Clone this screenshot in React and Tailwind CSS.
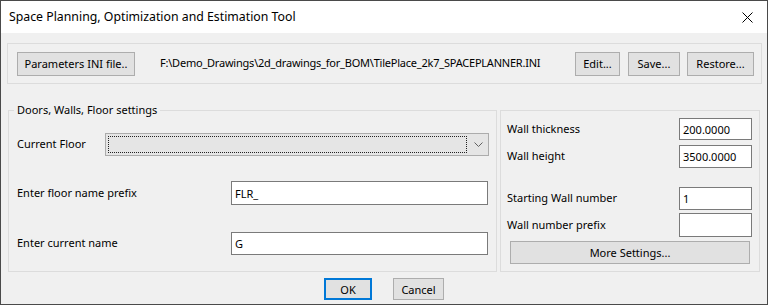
import React from "react";

const font = { fontFamily: '"Noto Sans", "Open Sans", sans-serif' };

function Btn({ children, className = "" }) {
  return (
    <div
      className={
        "flex items-center justify-center bg-[#e1e1e1] border border-[#adadad] text-[11px] text-black leading-none " +
        className
      }
    >
      {children}
    </div>
  );
}

function TextBox({ value, className = "" }) {
  return (
    <div
      className={
        "flex items-center bg-white border border-[#7a7a7a] pl-[3px] text-[11px] text-black leading-none " +
        className
      }
    >
      {value}
    </div>
  );
}

export default function App() {
  return (
    <div
      className="w-[768px] h-[305px] bg-[#f0f0f0] border border-[#4a4a4a] flex flex-col text-[11px] text-black overflow-hidden"
      style={font}
    >
      {/* Title bar */}
      <div className="h-[32px] bg-white flex items-center justify-between pl-[8px] pr-[14px] shrink-0">
        <span className="text-[12.3px]">Space Planning, Optimization and Estimation Tool</span>
        <svg width="11" height="11" viewBox="0 0 11 11">
          <path d="M0.5 0.5 L10.5 10.5 M10.5 0.5 L0.5 10.5" stroke="#000" strokeWidth="1" />
        </svg>
      </div>

      {/* INI file group */}
      <div className="mt-[10px] ml-[6px] mr-[5px] h-[41px] border border-[#dcdcdc] flex items-center pl-[9px] pr-[7px] shrink-0">
        <Btn className="w-[118px] h-[24px]">Parameters INI file..</Btn>
        <span className="ml-[25px] tracking-[-0.22px]">F:\Demo_Drawings\2d_drawings_for_BOM\TilePlace_2k7_SPACEPLANNER.INI</span>
        <div className="flex-1" />
        <Btn className="w-[45px] h-[24px]">Edit...</Btn>
        <Btn className="w-[52px] h-[24px] ml-[8px]">Save...</Btn>
        <Btn className="w-[67px] h-[24px] ml-[7px]">Restore...</Btn>
      </div>

      {/* Groups */}
      <div className="mt-[26px] ml-[7px] flex gap-[3px] shrink-0">
        {/* Left group */}
        <div className="w-[489px] h-[162px] border border-[#dcdcdc] flex flex-col">
          <span className="-mt-[9px] ml-[5px] px-[3px] bg-[#f0f0f0] w-fit leading-[16px] h-[16px]">
            Doors, Walls, Floor settings
          </span>
          <div className="mt-[15px] h-[23px] flex items-center pl-[8px] pr-[7px]">
            <span className="w-[88px]">Current Floor</span>
            <div className="flex-1 h-full bg-[#e5e5e5] border border-[#acacac] flex items-center pl-[2px] pr-[5px]">
              <div className="flex-1 h-[17px] border border-dotted border-[#222]" />
              <svg width="9" height="6" viewBox="0 0 9 6" className="ml-[7px]">
                <path d="M0.5 0.5 L4.5 4.5 L8.5 0.5" fill="none" stroke="#606060" strokeWidth="1" />
              </svg>
            </div>
          </div>
          <div className="mt-[25px] h-[24px] flex items-center pl-[8px] pr-[8px]">
            <span className="flex-1">Enter floor name prefix</span>
            <TextBox value="FLR_" className="w-[257px] h-full" />
          </div>
          <div className="mt-[27px] h-[23px] flex items-center pl-[8px] pr-[8px]">
            <span className="flex-1">Enter current name</span>
            <TextBox value="G" className="w-[257px] h-full" />
          </div>
        </div>

        {/* Right group */}
        <div className="w-[260px] h-[162px] border border-[#dcdcdc] flex flex-col pl-[6px] pr-[7px]">
          <div className="mt-[7px] h-[22px] flex items-center">
            <span className="flex-1">Wall thickness</span>
            <TextBox value="200.0000" className="w-[73px] h-full" />
          </div>
          <div className="mt-[5px] h-[23px] flex items-center">
            <span className="flex-1">Wall height</span>
            <TextBox value="3500.0000" className="w-[73px] h-full" />
          </div>
          <div className="mt-[19px] h-[23px] flex items-center">
            <span className="flex-1">Starting Wall number</span>
            <TextBox value="1" className="w-[73px] h-full" />
          </div>
          <div className="mt-[3px] h-[24px] flex items-center">
            <span className="flex-1">Wall number prefix</span>
            <TextBox value="" className="w-[73px] h-full" />
          </div>
          <Btn className="mt-[4px] ml-[3px] w-[240px] h-[23px]">More Settings...</Btn>
        </div>
      </div>

      {/* Bottom buttons */}
      <div className="mt-[6px] flex justify-center gap-[21px] shrink-0">
        <Btn className="w-[48px] h-[22px] !border-2 !border-[#0078d7]">OK</Btn>
        <Btn className="w-[51px] h-[22px]">Cancel</Btn>
      </div>
    </div>
  );
}
